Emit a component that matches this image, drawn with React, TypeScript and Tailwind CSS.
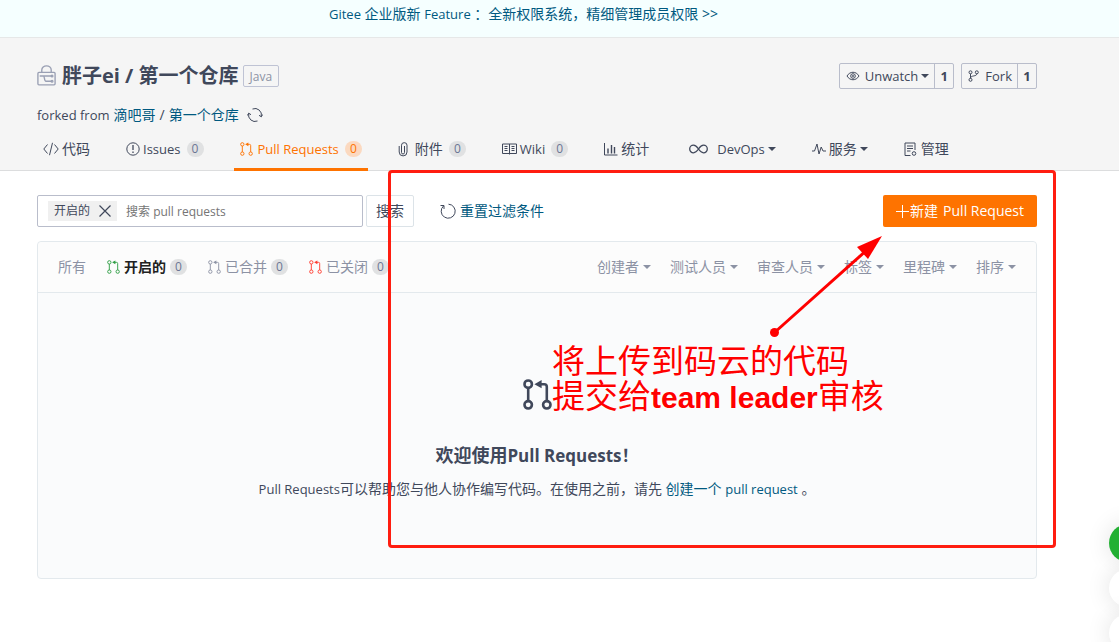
import React from 'react';

interface IconProps {
  className?: string;
}

const PullIcon: React.FC<IconProps & { stroke?: number }> = ({ className, stroke = 2 }) => (
  <svg viewBox="0 0 28 30" fill="none" stroke="currentColor" strokeWidth={stroke} className={className}>
    <circle cx="5" cy="5" r="3.6" />
    <circle cx="5" cy="25" r="3.6" />
    <circle cx="23" cy="25" r="3.6" />
    <path d="M5 8.6v12.8M23 21.4V7.5q0-2.5-2.500-2.500H17" />
    <path d="M11 5l7-4v8z" fill="currentColor" stroke="none" />
  </svg>
);

const RepoIcon: React.FC<IconProps> = ({ className }) => (
  <svg viewBox="0 0 18 21" fill="none" stroke="currentColor" strokeWidth="1.3" className={className}>
    <rect x="0.8" y="7" width="16.400" height="12" rx="1" />
    <path d="M4.500 7V4.800a4.500 4 0 0 1 9 0V7" />
    <path d="M2.500 10.500h11.500M6 10.500c1.500 0 .5 5 2.500 5h5.500" />
    <circle cx="14.300" cy="10.500" r="0.8" />
    <circle cx="14.300" cy="15.500" r="0.8" />
  </svg>
);

const SyncIcon: React.FC<IconProps> = ({ className }) => (
  <svg viewBox="0 0 16 16" fill="none" stroke="currentColor" className={className}>
    <path d="M5.500 2A6.500 6.500 0 0 1 14.300 9.500M10.500 14A6.500 6.500 0 0 1 1.700 6.500" />
    <path d="M12 8.300l2.300 1.500 1.400-2.300M4 7.700L1.700 6.200 0.300 8.500" />
  </svg>
);

const ResetIcon: React.FC<IconProps> = ({ className }) => (
  <svg viewBox="0 0 16 16" fill="none" stroke="currentColor" className={className}>
    <path d="M3.500 3A7 7 0 1 0 8.500 1.200" />
    <path d="M0.500 2.500h3.500v3.500" />
  </svg>
);

const CodeIcon: React.FC<IconProps> = ({ className }) => (
  <svg viewBox="0 0 16 14" fill="none" stroke="currentColor" className={className}>
    <path d="M4.500 2.500L0.800 7l3.700 4.500M11.500 2.500L15.200 7l-3.700 4.500M9.500 0.800l-3 12.400" />
  </svg>
);

const IssueIcon: React.FC<IconProps> = ({ className }) => (
  <svg viewBox="0 0 14 14" fill="none" stroke="currentColor" className={className}>
    <circle cx="7" cy="7" r="6.200" />
    <path d="M7 3v5M7 9.500v1.500" strokeWidth="1.300" />
  </svg>
);

const ClipIcon: React.FC<IconProps> = ({ className }) => (
  <svg viewBox="0 0 10 15" fill="none" stroke="currentColor" className={className}>
    <path d="M6.500 4v6.500a1.500 1.500 0 0 1-3 0V3.200a2.600 2.400 0 0 1 5.500 0V10a3.900 3.900 0 0 1-7.800 0V4" />
  </svg>
);

const WikiIcon: React.FC<IconProps> = ({ className }) => (
  <svg viewBox="0 0 15 12" fill="none" stroke="currentColor" className={className}>
    <path d="M0.500 1h14v9.500h-14zM7.500 1v10.500M2.500 3.500h3M2.500 5.500h3M2.500 7.500h3M9.500 3.500h3M9.500 5.500h3M9.500 7.500h3" />
  </svg>
);

const StatsIcon: React.FC<IconProps> = ({ className }) => (
  <svg viewBox="0 0 14 14" fill="none" stroke="currentColor" className={className}>
    <path d="M0.500 1v12h13" />
    <path d="M4 11.500V6.500M7.500 11.500V3M10.500 11.500V5" strokeWidth="1.400" />
  </svg>
);

const DevOpsIcon: React.FC<IconProps> = ({ className }) => (
  <svg viewBox="0 0 19 10" fill="none" stroke="currentColor" strokeWidth="1.300" className={className}>
    <path d="M9.500 5C7.500 2 6 1.200 4.500 1.200a3.800 3.800 0 0 0 0 7.600C6 8.800 7.500 8 9.500 5s3.500-3.800 5-3.800a3.800 3.800 0 0 1 0 7.600c-1.500 0-3-.8-5-3.800z" />
  </svg>
);

const PulseIcon: React.FC<IconProps> = ({ className }) => (
  <svg viewBox="0 0 14 12" fill="none" stroke="currentColor" className={className}>
    <path d="M0 8h2.500L5 1l2 10 2.200-7L11 8h3" />
  </svg>
);

const ManageIcon: React.FC<IconProps> = ({ className }) => (
  <svg viewBox="0 0 13 15" fill="none" stroke="currentColor" className={className}>
    <path d="M6.500 13.500H1V1h10v7M3 4h6M3 6.500h6M3 9h3.500" />
    <circle cx="10" cy="11.500" r="1.800" />
  </svg>
);

const EyeIcon: React.FC<IconProps> = ({ className }) => (
  <svg viewBox="0 0 14 10" fill="none" stroke="currentColor" className={className}>
    <path d="M1 5c3-5 9-5 12 0-3 5-9 5-12 0z" />
    <circle cx="7" cy="5" r="2.300" />
    <circle cx="7" cy="5" r="0.600" />
  </svg>
);

const ForkIcon: React.FC<IconProps> = ({ className }) => (
  <svg viewBox="0 0 11 12" fill="none" stroke="currentColor" className={className}>
    <circle cx="2.500" cy="2.300" r="1.500" />
    <circle cx="8.800" cy="2.300" r="1.500" />
    <circle cx="2.500" cy="9.800" r="1.500" />
    <path d="M2.500 3.800v4.500M8.800 3.800c0 3-6.300 1.200-6.300 4.500" />
  </svg>
);

const Caret: React.FC<IconProps> = ({ className }) => (
  <svg viewBox="0 0 8 4" fill="currentColor" className={`h-1 w-2 shrink-0 ${className || ''}`}>
    <path d="M0 0h8L4 4z" />
  </svg>
);

const Badge: React.FC<{ active?: boolean }> = ({ active }) => (
  <span
    className={`flex h-4 w-[17px] items-center justify-center rounded-full text-xs leading-4 ${
      active ? 'bg-[#fbd9c0] text-[#fe7300]' : 'bg-[#e0e1e2] text-[#6b7594]'
    }`}
  >
    0
  </span>
);

interface Tab {
  label: string;
  icon: React.ReactNode;
  latin?: boolean;
  active?: boolean;
  badge?: boolean;
  caret?: boolean;
}

const tabs: Tab[] = [
  { label: '代码', icon: <CodeIcon className="h-[14px] w-4" /> },
  { label: 'Issues', icon: <IssueIcon className="size-[14px]" />, latin: true, badge: true },
  { label: 'Pull Requests', icon: <PullIcon className="mr-0.5 h-[14px] w-[13px]" />, latin: true, active: true, badge: true },
  { label: '附件', icon: <ClipIcon className="mr-1 h-[15px] w-[10px]" />, badge: true },
  { label: 'Wiki', icon: <WikiIcon className="h-3 w-[15px]" />, latin: true, badge: true },
  { label: '统计', icon: <StatsIcon className="size-[14px]" /> },
  { label: 'DevOps', icon: <DevOpsIcon className="mr-1.5 ml-1 h-[10px] w-[19px]" />, latin: true, caret: true },
  { label: '服务', icon: <PulseIcon className="h-3 w-[14px]" />, caret: true },
  { label: '管理', icon: <ManageIcon className="mr-px h-[15px] w-[13px]" /> },
];

const states = [
  { label: '开启的', color: 'text-[#2f9e44]', text: 'font-bold text-[#212121]' },
  { label: '已合并', color: 'text-[#8c92a4]', text: 'text-[#8c92a4]' },
  { label: '已关闭', color: 'text-[#ff3b30]', text: 'text-[#8c92a4]' },
];

const filters = ['创建者', '测试人员', '审查人员', '标签', '里程碑', '排序'];

const Header: React.FC = () => (
  <header className="border-b border-[#dcddde] bg-[#f5f5f5] pt-[25px] pr-[82px] pl-[37px]">
    <div className="flex h-[26px] items-center">
      <RepoIcon className="mr-[6px] h-[22px] w-[19px] text-[#9aa0b4]" />
      <h1 className="text-xl leading-6 font-bold">胖子ei / 第一个仓库</h1>
      <span className="ml-1 rounded-xs border border-[#bfc3d4] px-[6px] pt-px text-xs leading-[19px] text-[#8c92a4]">
        Java
      </span>
      <div className="ml-auto flex gap-[7px] text-[13px]">
        <div className="flex h-[26px] rounded-xs border border-[#b9bdcb]">
          <button className="flex items-center pr-[5px] pl-[6px]">
            <EyeIcon className="mr-[5px] h-[10px] w-[14px]" />
            Unwatch
            <Caret className="ml-[3px]" />
          </button>
          <button className="w-[19px] border-l border-[#b9bdcb] font-bold">1</button>
        </div>
        <div className="flex h-[26px] rounded-xs border border-[#b9bdcb]">
          <button className="flex items-center pr-[5px] pl-[6px]">
            <ForkIcon className="mr-[6px] h-3 w-[11px]" />
            Fork
          </button>
          <button className="w-[19px] border-l border-[#b9bdcb] font-bold">1</button>
        </div>
      </div>
    </div>

    <div className="mt-4 flex h-5 items-center gap-1">
      <span className="text-[13px]">forked from</span>
      <a href="#" className="text-[#005980]">滴吧哥</a>
      <span>/</span>
      <a href="#" className="text-[#005980]">第一个仓库</a>
      <button aria-label="sync" className="ml-1">
        <SyncIcon className="size-4" />
      </button>
    </div>

    <nav className="-mb-px mt-[2px] flex h-[44px] gap-6">
      {tabs.map((tab) => (
        <a
          key={tab.label}
          href="#"
          className={`flex items-center gap-[3px] border-b-3 px-[6px] pt-[3px] whitespace-nowrap ${
            tab.active ? 'border-[#fe7300] text-[#fe7300]' : 'border-transparent'
          }`}
        >
          {tab.icon}
          <span className={tab.latin ? 'text-[13px]' : ''}>{tab.label}</span>
          {tab.badge && <span className="ml-[3px]"><Badge active={tab.active} /></span>}
          {tab.caret && <Caret />}
        </a>
      ))}
    </nav>
  </header>
);

const SearchBar: React.FC = () => (
  <div className="flex h-8 items-center">
    <div className="flex h-8 w-[326px] items-center rounded-xs border border-[#b9bdcb] pl-[10px]">
      <span className="flex h-5 shrink-0 items-center gap-[9px] bg-[#f0f0f0] px-[6px] text-xs">
        开启的
        <button aria-label="remove">
          <svg viewBox="0 0 12 12" fill="none" stroke="currentColor" strokeWidth="1.200" className="size-3">
            <path d="M0.500 0.500l11 11M11.500 0.500l-11 11" />
          </svg>
        </button>
      </span>
      <input
        type="text"
        aria-label="搜索 pull requests"
        placeholder="搜索 pull requests"
        className="ml-[9px] w-full min-w-0 pt-0.5 text-xs outline-none placeholder:text-[#757575]"
      />
    </div>
    <button className="ml-[3px] h-8 w-12 rounded-xs border border-[#dce3e8]">搜索</button>
    <a href="#" className="ml-[26px] flex items-center gap-1 text-[#005980]">
      <ResetIcon className="size-4 text-[#40485b]" />
      重置过滤条件
    </a>
    <button className="ml-auto flex h-8 items-center rounded-xs bg-[#fe7300] px-[13px] text-white">
      <svg viewBox="0 0 13 13" fill="none" stroke="currentColor" className="size-[13px]">
        <path d="M6.500 0v13M0 6.500h13" />
      </svg>
      <span className="ml-px">新建</span>
      <span className="ml-[5px]">Pull Request</span>
    </button>
  </div>
);

const PullList: React.FC = () => (
  <section className="mt-[14px] rounded-sm border border-[#e3e9ed] bg-[#fafbfc]">
    <div className="flex h-[51px] items-center justify-between rounded-t-sm border-b border-[#e3e9ed] bg-[#fcfcfc] px-5 text-[#8c92a4]">
      <div className="flex items-center gap-[21px]">
        <button>所有</button>
        {states.map((state) => (
          <button key={state.label} className="flex items-center gap-1">
            <PullIcon className={`h-[14px] w-[13px] ${state.color}`} />
            <span className={state.text}>{state.label}</span>
            <Badge />
          </button>
        ))}
      </div>
      <div className="flex items-center gap-[19px]">
        {filters.map((filter) => (
          <button key={filter} className="flex items-center gap-1">
            {filter}
            <Caret />
          </button>
        ))}
      </div>
    </div>
    <div className="flex h-[285px] flex-col items-center pt-[86px]">
      <PullIcon stroke={2.5} className="h-[31px] w-[29px]" />
      <h2 className="mt-[33px] text-lg leading-6 font-bold">
        欢迎使用<span className="text-[17px]">Pull Requests！</span>
      </h2>
      <p className="mt-[11px] leading-5">
        <span className="text-[13px]">Pull Requests</span>
        可以帮助您与他人协作编写代码。在使用之前，请先{' '}
        <a href="#" className="text-[#005980]">
          创建一个 <span className="text-[13px]">pull request</span>
        </a>{' '}
        。
      </p>
    </div>
  </section>
);

// Red frame, arrow and note drawn on top of the page
const Annotation: React.FC = () => (
  <div className="pointer-events-none absolute top-[170px] left-[388px] h-[378px] w-[668px] rounded-sm border-3 border-[#ff1d10]">
    <svg viewBox="0 0 112 102" className="absolute top-[63px] left-[379px] h-[102px] w-[112px]" fill="#ff0000">
      <circle cx="4.500" cy="96.500" r="4.500" />
      <path d="M4.500 96.500L98 13" stroke="#ff0000" strokeWidth="3" />
      <path d="M112 0L98 23 87 11z" />
    </svg>
    <p className="absolute top-[171px] left-[161px] font-['Liberation_Sans','Noto_Sans_CJK_SC',sans-serif] text-[33px] leading-[35px] whitespace-nowrap text-[#ff0000] [text-shadow:0_0_3px_#fff,0_0_3px_#fff]">
      将上传到码云的代码
      <br />
      提交给<span className="text-[30px] font-bold">team leader</span>审核
    </p>
  </div>
);

const FloatingButtons: React.FC = () => (
  <div className="fixed top-[524px] -right-7 flex flex-col gap-[7px]">
    <button aria-label="chat" className="size-[38px] rounded-full bg-[#22b033] shadow-[0_0_24px_rgba(0,0,0,0.12)]" />
    <button aria-label="feedback" className="size-[38px] rounded-full bg-white shadow-[0_0_24px_rgba(0,0,0,0.12)]" />
    <button aria-label="top" className="size-[38px] rounded-full bg-white shadow-[0_0_24px_rgba(0,0,0,0.12)]" />
  </div>
);

const App: React.FC = () => {
  return (
    <div className="relative min-h-screen overflow-hidden bg-white font-['Open_Sans','Noto_Sans_CJK_SC',sans-serif] text-sm text-[#40485b]">
      <div className="flex h-[38px] justify-center border-b border-[#e6e8e8] bg-[#f5ffff] pt-1 pr-[72px]">
        <a href="#" className="leading-5 text-[#005980]">
          <span className="text-[13px]">Gitee</span> 企业版新 <span className="text-[13px]">Feature</span> ：全新权限系统，精细管理成员权限 &gt;&gt;
        </a>
      </div>
      <Header />
      <main className="pt-6 pr-[82px] pl-[37px]">
        <SearchBar />
        <PullList />
      </main>
      <Annotation />
      <FloatingButtons />
    </div>
  );
};

export default App;
